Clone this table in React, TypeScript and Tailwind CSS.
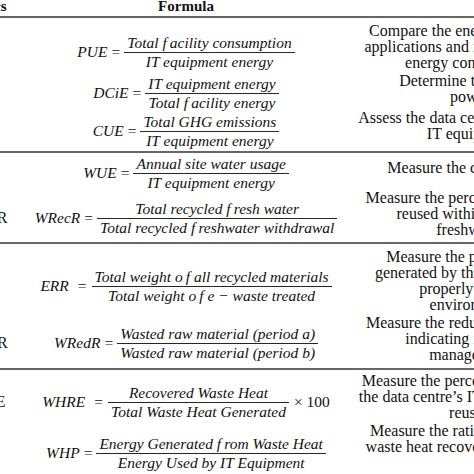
type Row = {
  metric: string;
  label: string;
  num: string;
  den: string;
  suffix?: string;
  wideEq?: boolean;
  desc: string[];
  rowClass: string;
  formulaPad: string;
  descPad: string;
};

const GROUPS: Row[][] = [
  [
    {
      metric: "PUE",
      label: "PUE",
      num: "Total f\u2009acility consumption",
      den: "IT equipment energy",
      desc: ["Compare the energy used by IT", "applications and infrastructure to", "energy consumption"],
      rowClass: "h-[54px]",
      formulaPad: "pt-[15.5px]",
      descPad: "pt-[5px]",
    },
    {
      metric: "DCiE",
      label: "DCiE",
      num: "IT equipment energy",
      den: "Total f\u2009acility energy",
      desc: ["Determine the ratio of", "power"],
      rowClass: "h-[37px]",
      formulaPad: "pt-[2.5px]",
      descPad: "pt-[1px]",
    },
    {
      metric: "CUE",
      label: "CUE",
      num: "Total GHG emissions",
      den: "IT equipment energy",
      desc: ["Assess the data centre\u2019s carbon per", "IT equipment"],
      rowClass: "h-[42px]",
      formulaPad: "pt-[3.5px]",
      descPad: "pt-[1px]",
    },
  ],
  [
    {
      metric: "WUE",
      label: "WUE",
      num: "Annual site water usage",
      den: "IT equipment energy",
      desc: ["Measure the consumption"],
      rowClass: "h-[37px]",
      formulaPad: "pt-[1.5px]",
      descPad: "pt-[7px]",
    },
    {
      metric: "WRecR",
      label: "WRecR",
      num: "Total recycled f\u2009resh water",
      den: "Total recycled f\u2009reshwater withdrawal",
      desc: ["Measure the percentage of water", "reused within the site\u2019s", "freshwater"],
      rowClass: "h-[52px]",
      formulaPad: "pt-[9.5px]",
      descPad: "pt-0",
    },
  ],
  [
    {
      metric: "ERR",
      label: "ERR",
      num: "Total weight o\u2009f all recycled materials",
      den: "Total weight o\u2009f e \u2212 waste treated",
      wideEq: true,
      desc: ["Measure the proportion of", "generated by the data centre\u2019s", "properly treated", "environment"],
      rowClass: "h-[71px]",
      formulaPad: "pt-[23.5px]",
      descPad: "pt-[5px]",
    },
    {
      metric: "WRedR",
      label: "WRedR",
      num: "Wasted raw material (period a)",
      den: "Wasted raw material (period b)",
      desc: ["Measure the reduction in wasted", "indicating improved", "management"],
      rowClass: "h-[53px]",
      formulaPad: "pt-[9.5px]",
      descPad: "pt-0",
    },
  ],
  [
    {
      metric: "WHRE",
      label: "WHRE",
      num: "Recovered Waste Heat",
      den: "Total Waste Heat Generated",
      suffix: "\u00d7 100",
      wideEq: true,
      desc: ["Measure the percentage of energy", "the data centre\u2019s IT equipment that", "reused"],
      rowClass: "h-[52px]",
      formulaPad: "pt-[13.5px]",
      descPad: "pt-[3px]",
    },
    {
      metric: "WHP",
      label: "WHP",
      num: "Energy Generated f\u2009rom Waste Heat",
      den: "Energy Used by IT Equipment",
      desc: ["Measure the ratio of the energy", "waste heat recovery systems and"],
      rowClass: "h-[52px]",
      formulaPad: "pt-[12.5px]",
      descPad: "pt-[1px]",
    },
  ],
];

const Fraction = ({ num, den }: { num: string; den: string }) => (
  <div className="flex flex-col">
    <div className="h-[18px] whitespace-nowrap px-[3px] text-center leading-[18px]">{num}</div>
    <div className="h-px bg-[#262626]" />
    <div className="h-[18px] whitespace-nowrap px-[3px] text-center leading-[18px]">{den}</div>
  </div>
);

const MetricRow = ({ row }: { row: Row }) => (
  <div className={`grid grid-cols-[104px_304px_264px] ${row.rowClass}`}>
    <div className={row.formulaPad}>
      <div className="flex h-[37px] items-center justify-center text-[16px]">{row.metric}</div>
    </div>
    <div className={row.formulaPad}>
      <div className="flex h-[37px] items-center justify-center text-[15.5px] italic">
        <span>{row.label}</span>
        <span className={`not-italic ${row.wideEq ? "pl-[9px] pr-[5px]" : "px-[4px]"}`}>=</span>
        <Fraction num={row.num} den={row.den} />
        {row.suffix && <span className="pl-[5px] not-italic">{row.suffix}</span>}
      </div>
    </div>
    <div className={`${row.descPad} text-[16px]`}>
      {row.desc.map((line) => (
        <div key={line} className="whitespace-nowrap text-center leading-[16px]">
          {line}
        </div>
      ))}
    </div>
  </div>
);

export default function App() {
  return (
    <div className="h-[474px] w-[474px] overflow-hidden bg-white font-['Liberation_Serif',serif] text-[#111111]">
      <div className="-ml-[70px] w-[672px]">
        <div className="grid h-[16px] grid-cols-[104px_304px_264px] overflow-hidden text-[15px] font-bold">
          <div className="-mt-[1px] text-center leading-[14px]">Metrics</div>
          <div className="-mt-[1px] text-center leading-[14px]">Formula</div>
          <div />
        </div>
        {GROUPS.map((group, i) => (
          <div key={i}>
            <div className="h-[2px] bg-[#666666]" />
            {group.map((row) => (
              <MetricRow key={row.metric} row={row} />
            ))}
          </div>
        ))}
      </div>
    </div>
  );
}
